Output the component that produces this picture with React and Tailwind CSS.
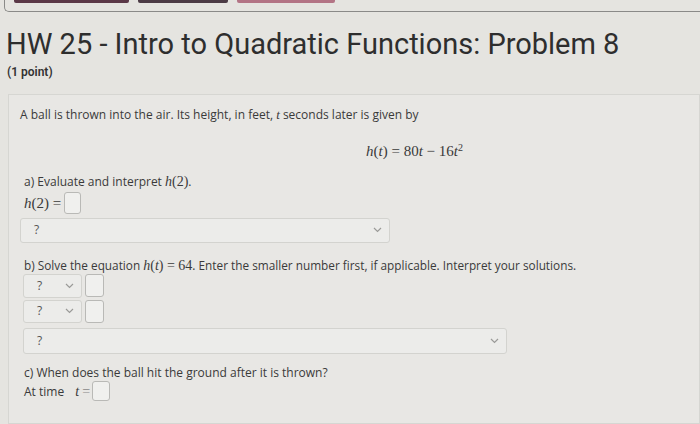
import React from "react";

function Box({ w = "w-[17px]", h = "h-[21px]" }) {
  return <span className={`inline-block ${w} ${h} border border-[#b9b9b6] rounded-[3px] bg-[#f0f0ee] align-middle`} />;
}

function Chevron() {
  return (
    <svg width="9" height="6" viewBox="0 0 9 6" className="shrink-0">
      <path d="M1 1l3.5 3.5L8 1" fill="none" stroke="#9a9a98" strokeWidth="1.2" />
    </svg>
  );
}

function Select({ cls }) {
  return (
    <div className={`flex items-center justify-between border border-[#d3d3cf] rounded-[3px] bg-[#ececea] pl-[13px] pr-[7px] ${cls}`}>
      <span className="text-[12px] text-[#555]">?</span>
      <Chevron />
    </div>
  );
}

export default function App() {
  const serif = { fontFamily: '"Liberation Serif", serif' };
  return (
    <div className="w-[700px] h-[424px] overflow-hidden bg-[#e5e4e0] text-[#333]" style={{ fontFamily: '"Open Sans", sans-serif' }}>
      <div className="ml-[4px] h-[12px] border-l border-b border-[#8a8a88] rounded-bl-[5px] flex gap-[9px] pl-[9px]">
        <div className="w-[115px] h-[3px] bg-[#5b3847] rounded-b-[2px]" />
        <div className="w-[90px] h-[3px] bg-[#4c3b45] rounded-b-[2px]" />
        <div className="w-[98px] h-[3px] bg-[#b37485] rounded-b-[2px]" />
      </div>
      <h1 className="mt-[16px] ml-[6px] text-[29px] leading-[32px] text-[#2e2e2e]" style={{ fontFamily: 'Roboto, sans-serif' }}>
        HW 25 - Intro to Quadratic Functions: Problem 8
      </h1>
      <div className="ml-[7px] mt-[3px] text-[12px] font-semibold text-[#333]" style={{ fontFamily: 'Roboto, sans-serif' }}>(1 point)</div>
      <div className="ml-[8px] mt-[13px] h-[330px] border border-[#d6d6d2] bg-[#e8e7e4] pl-[11px] pt-[12px] text-[12px] text-[#3a3a3a]">
        <div className="leading-[16px]">
          A ball is thrown into the air. Its height, in feet, <span style={serif} className="italic text-[13px]">t</span> seconds later is given by
        </div>
        <div className="mt-[19px] ml-[346px] text-[15px] leading-[18px]" style={serif}>
          <i>h</i>(<i>t</i>) = 80<i>t</i> − 16<i>t</i><sup className="text-[10px]">2</sup>
        </div>
        <div className="mt-[14px] ml-[4px] leading-[16px]">
          a) Evaluate and interpret <span style={serif} className="text-[14px]"><i>h</i>(2)</span>.
        </div>
        <div className="ml-[4px] mt-[2px] flex items-center gap-[3px] text-[15px]" style={serif}>
          <span><i>h</i>(2) =</span>
          <Box h="h-[22px]" />
        </div>
        <Select cls="mt-[3px] ml-[0px] w-[370px] h-[25px]" />
        <div className="mt-[14px] ml-[4px] leading-[16px] text-[11.8px]">
          b) Solve the equation <span style={serif} className="text-[14px]"><i>h</i>(<i>t</i>) = 64</span>. Enter the smaller number first, if applicable. Interpret your solutions.
        </div>
        <div className="mt-[0px] ml-[3px] flex items-center gap-[3px]">
          <Select cls="w-[59px] h-[24px]" />
          <Box w="w-[19px]" h="h-[23px]" />
        </div>
        <div className="mt-[2px] ml-[3px] flex items-center gap-[3px]">
          <Select cls="w-[59px] h-[23px]" />
          <Box w="w-[19px]" h="h-[23px]" />
        </div>
        <Select cls="mt-[5px] ml-[3px] w-[484px] h-[26px]" />
        <div className="mt-[11px] ml-[4px] leading-[16px] text-[12px]">
          c) When does the ball hit the ground after it is thrown?
        </div>
        <div className="ml-[4px] mt-[0px] flex items-center gap-[2px] text-[12px]">
          <span>At time <span style={serif} className="italic text-[14px] ml-[8px]">t</span> <span style={serif} className="text-[14px] text-[#888]">=</span></span>
          <Box w="w-[18px]" h="h-[20px]" />
        </div>
      </div>
    </div>
  );
}
